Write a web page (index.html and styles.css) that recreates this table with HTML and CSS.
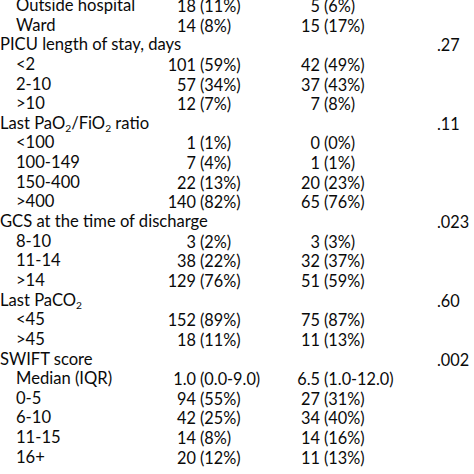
FILE: index.html
```html
<!DOCTYPE html>
<html>
<head>
<meta charset="utf-8">
<link rel="stylesheet" href="styles.css">
</head>
<body>
<div class="table">
  <div class="lab sub">Outside hospital</div><div class="val"><span class="n n2">18</span><span class="p">(11%)</span></div><div class="val"><span class="n n3">5</span><span class="p">(6%)</span></div><div class="pv"></div>
  <div class="lab sub">Ward</div><div class="val"><span class="n n2">14</span><span class="p">(8%)</span></div><div class="val"><span class="n n3">15</span><span class="p">(17%)</span></div><div class="pv"></div>

  <div class="lab head">PICU length of stay, days</div><div class="pv">.27</div>
  <div class="lab sub">&lt;2</div><div class="val"><span class="n n2">101</span><span class="p">(59%)</span></div><div class="val"><span class="n n3">42</span><span class="p">(49%)</span></div><div class="pv"></div>
  <div class="lab sub">2-10</div><div class="val"><span class="n n2">57</span><span class="p">(34%)</span></div><div class="val"><span class="n n3">37</span><span class="p">(43%)</span></div><div class="pv"></div>
  <div class="lab sub">&gt;10</div><div class="val"><span class="n n2">12</span><span class="p">(7%)</span></div><div class="val"><span class="n n3">7</span><span class="p">(8%)</span></div><div class="pv"></div>

  <div class="lab head">Last PaO<sub>2</sub>/FiO<sub>2</sub> ratio</div><div class="pv">.11</div>
  <div class="lab sub">&lt;100</div><div class="val"><span class="n n2">1</span><span class="p">(1%)</span></div><div class="val"><span class="n n3">0</span><span class="p">(0%)</span></div><div class="pv"></div>
  <div class="lab sub">100-149</div><div class="val"><span class="n n2">7</span><span class="p">(4%)</span></div><div class="val"><span class="n n3">1</span><span class="p">(1%)</span></div><div class="pv"></div>
  <div class="lab sub">150-400</div><div class="val"><span class="n n2">22</span><span class="p">(13%)</span></div><div class="val"><span class="n n3">20</span><span class="p">(23%)</span></div><div class="pv"></div>
  <div class="lab sub">&gt;400</div><div class="val"><span class="n n2">140</span><span class="p">(82%)</span></div><div class="val"><span class="n n3">65</span><span class="p">(76%)</span></div><div class="pv"></div>

  <div class="lab head">GCS at the time of discharge</div><div class="pv">.023</div>
  <div class="lab sub">8-10</div><div class="val"><span class="n n2">3</span><span class="p">(2%)</span></div><div class="val"><span class="n n3">3</span><span class="p">(3%)</span></div><div class="pv"></div>
  <div class="lab sub">11-14</div><div class="val"><span class="n n2">38</span><span class="p">(22%)</span></div><div class="val"><span class="n n3">32</span><span class="p">(37%)</span></div><div class="pv"></div>
  <div class="lab sub">&gt;14</div><div class="val"><span class="n n2">129</span><span class="p">(76%)</span></div><div class="val"><span class="n n3">51</span><span class="p">(59%)</span></div><div class="pv"></div>

  <div class="lab head">Last PaCO<sub>2</sub></div><div class="pv">.60</div>
  <div class="lab sub">&lt;45</div><div class="val"><span class="n n2">152</span><span class="p">(89%)</span></div><div class="val"><span class="n n3">75</span><span class="p">(87%)</span></div><div class="pv"></div>
  <div class="lab sub">&gt;45</div><div class="val"><span class="n n2">18</span><span class="p">(11%)</span></div><div class="val"><span class="n n3">11</span><span class="p">(13%)</span></div><div class="pv"></div>

  <div class="lab head">SWIFT score</div><div class="pv">.002</div>
  <div class="lab sub">Median (IQR)</div><div class="val"><span class="n n2">1.0</span><span class="p">(0.0-9.0)</span></div><div class="val"><span class="n n3">6.5</span><span class="p">(1.0-12.0)</span></div><div class="pv"></div>
  <div class="lab sub">0-5</div><div class="val"><span class="n n2">94</span><span class="p">(55%)</span></div><div class="val"><span class="n n3">27</span><span class="p">(31%)</span></div><div class="pv"></div>
  <div class="lab sub">6-10</div><div class="val"><span class="n n2">42</span><span class="p">(25%)</span></div><div class="val"><span class="n n3">34</span><span class="p">(40%)</span></div><div class="pv"></div>
  <div class="lab sub">11-15</div><div class="val"><span class="n n2">14</span><span class="p">(8%)</span></div><div class="val"><span class="n n3">14</span><span class="p">(16%)</span></div><div class="pv"></div>
  <div class="lab sub">16+</div><div class="val"><span class="n n2">20</span><span class="p">(12%)</span></div><div class="val"><span class="n n3">11</span><span class="p">(13%)</span></div><div class="pv"></div>
</div>
</body>
</html>
```

FILE: styles.css
```css
html, body {
  margin: 0;
  padding: 0;
  background: #ffffff;
}
body {
  width: 474px;
  height: 474px;
  overflow: hidden;
  font-family: "Lato", "Open Sans", sans-serif;
  font-size: 16px;
  color: #0a0a0a;
}
.table {
  display: grid;
  grid-template-columns: 160px 120px 157px 1fr;
  grid-auto-rows: 19.65px;
  margin-top: -4px;
  line-height: 19.65px;
  white-space: nowrap;
}
.lab {
  font-size: 16.6px;
}
.lab.sub {
  padding-left: 16px;
}
.lab.head {
  grid-column: 1 / 4;
  padding-left: 0;
}
.val {
  display: flex;
  font-size: 16.3px;
}
.pv {
  font-size: 16.3px;
}
.n {
  display: inline-block;
  text-align: right;
}
.n2 {
  width: 36px;
}
.n3 {
  width: 40px;
}
.p {
  margin-left: 4px;
}
sub {
  font-size: 0.62em;
  line-height: 0;
  vertical-align: -0.25em;
}
```
